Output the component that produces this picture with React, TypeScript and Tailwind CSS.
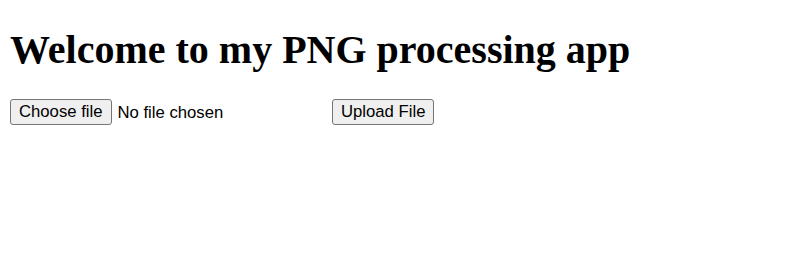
export default function App() {
  const btn =
    "h-[26px] px-[8px] border border-[#767676] bg-[#efefef] rounded-[3px] text-[16.7px] leading-none text-black flex items-center";
  return (
    <div className="bg-white min-h-[263px] pl-[10px] pt-[26.8px]">
      <h1
        className="text-[40px] font-bold leading-[46px] text-black m-0"
        style={{ fontFamily: '"Liberation Serif", "Times New Roman", serif' }}
      >
        Welcome to my PNG processing app
      </h1>
      <form
        className="mt-[26.5px] flex items-center"
        style={{ fontFamily: '"Liberation Sans", Arial, sans-serif' }}
        onSubmit={(e) => e.preventDefault()}
      >
        <div className="w-[316px] flex items-center">
          <button type="button" className={btn}>
            Choose file
          </button>
          <span className="ml-[6px] text-[16.7px] text-black">No file chosen</span>
        </div>
        <button type="submit" className={btn + " ml-[6px]"}>
          Upload File
        </button>
      </form>
    </div>
  );
}
